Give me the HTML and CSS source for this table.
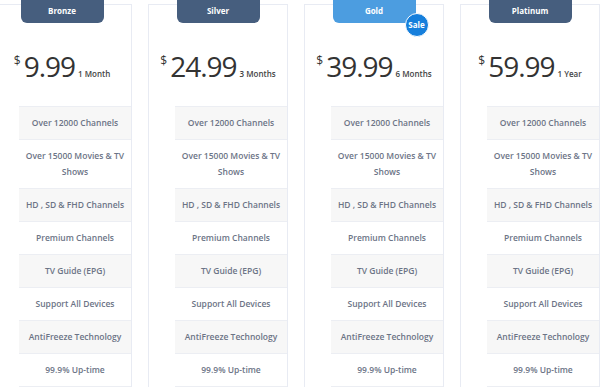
FILE: index.html
```html
<!DOCTYPE html>
<html>
<head>
<meta charset="utf-8">
<link rel="stylesheet" href="styles.css">
</head>
<body>
<div class="plans">
  <div class="card">
    <div class="tab">Bronze</div>
    <div class="price"><span class="cur">$</span><span class="amt">9.99</span><span class="per">1 Month</span></div>
    <ul class="features">
      <li>Over 12000 Channels</li>
      <li>Over 15000 Movies &amp; TV Shows</li>
      <li>HD , SD &amp; FHD Channels</li>
      <li>Premium Channels</li>
      <li>TV Guide (EPG)</li>
      <li>Support All Devices</li>
      <li>AntiFreeze Technology</li>
      <li>99.9% Up-time</li>
      <li class="more"></li>
    </ul>
  </div>
  <div class="card">
    <div class="tab">Silver</div>
    <div class="price"><span class="cur">$</span><span class="amt">24.99</span><span class="per">3 Months</span></div>
    <ul class="features">
      <li>Over 12000 Channels</li>
      <li>Over 15000 Movies &amp; TV Shows</li>
      <li>HD , SD &amp; FHD Channels</li>
      <li>Premium Channels</li>
      <li>TV Guide (EPG)</li>
      <li>Support All Devices</li>
      <li>AntiFreeze Technology</li>
      <li>99.9% Up-time</li>
      <li class="more"></li>
    </ul>
  </div>
  <div class="card">
    <div class="tab tab-gold">Gold<span class="sale">Sale</span></div>
    <div class="price"><span class="cur">$</span><span class="amt">39.99</span><span class="per">6 Months</span></div>
    <ul class="features">
      <li>Over 12000 Channels</li>
      <li>Over 15000 Movies &amp; TV Shows</li>
      <li>HD , SD &amp; FHD Channels</li>
      <li>Premium Channels</li>
      <li>TV Guide (EPG)</li>
      <li>Support All Devices</li>
      <li>AntiFreeze Technology</li>
      <li>99.9% Up-time</li>
      <li class="more"></li>
    </ul>
  </div>
  <div class="card">
    <div class="tab">Platinum</div>
    <div class="price"><span class="cur">$</span><span class="amt">59.99</span><span class="per">1 Year</span></div>
    <ul class="features">
      <li>Over 12000 Channels</li>
      <li>Over 15000 Movies &amp; TV Shows</li>
      <li>HD , SD &amp; FHD Channels</li>
      <li>Premium Channels</li>
      <li>TV Guide (EPG)</li>
      <li>Support All Devices</li>
      <li>AntiFreeze Technology</li>
      <li>99.9% Up-time</li>
      <li class="more"></li>
    </ul>
  </div>
</div>
</body>
</html>
```
FILE: styles.css
```css
html, body {
  margin: 0;
  padding: 0;
  background: #ffffff;
  height: 387px;
  overflow: hidden;
}
body {
  font-family: "Open Sans", "Liberation Sans", sans-serif;
}
.plans {
  display: flex;
  gap: 16px;
  margin: 4px 0 0 -8px;
}
.card {
  flex: 0 0 140px;
  box-sizing: border-box;
  border: 1px solid #e8ebf3;
  background: #fff;
}
.tab {
  position: relative;
  width: 83px;
  height: 23px;
  margin: -5px auto 0;
  background: #465e7e;
  border-radius: 0 0 6px 6px;
  color: #fff;
  font-size: 8px;
  font-weight: 700;
  line-height: 22px;
  text-align: center;
}
.tab-gold {
  background: #4c9de0;
}
.sale {
  position: absolute;
  right: -13px;
  top: 13px;
  width: 22px;
  height: 22px;
  border: 1.5px solid #fff;
  border-radius: 50%;
  background: #167fdc;
  color: #fff;
  font-size: 8px;
  font-weight: 700;
  line-height: 22px;
  text-align: center;
}
.price {
  padding: 29px 0 26px;
  height: 28px;
  text-align: center;
  color: #333;
  white-space: nowrap;
}
.cur {
  font-size: 12px;
  vertical-align: 12px;
  margin-right: 3px;
}
.amt {
  font-size: 28px;
  line-height: 28px;
  letter-spacing: -1px;
}
.per {
  font-size: 8px;
  font-weight: 600;
  color: #444;
  margin-left: 3px;
}
.features {
  list-style: none;
  margin: 0 0 0 26px;
  padding: 0;
  border-top: 1px solid #eceef3;
}
.features li {
  padding: 8px 2px;
  border-bottom: 1px solid #eceef3;
  font-size: 8.5px;
  font-weight: 600;
  line-height: 16px;
  color: #6c7486;
  text-align: center;
}
.features li:nth-child(odd) {
  background: #f7f7f7;
}
.features li.more {
  height: 16px;
}
```
